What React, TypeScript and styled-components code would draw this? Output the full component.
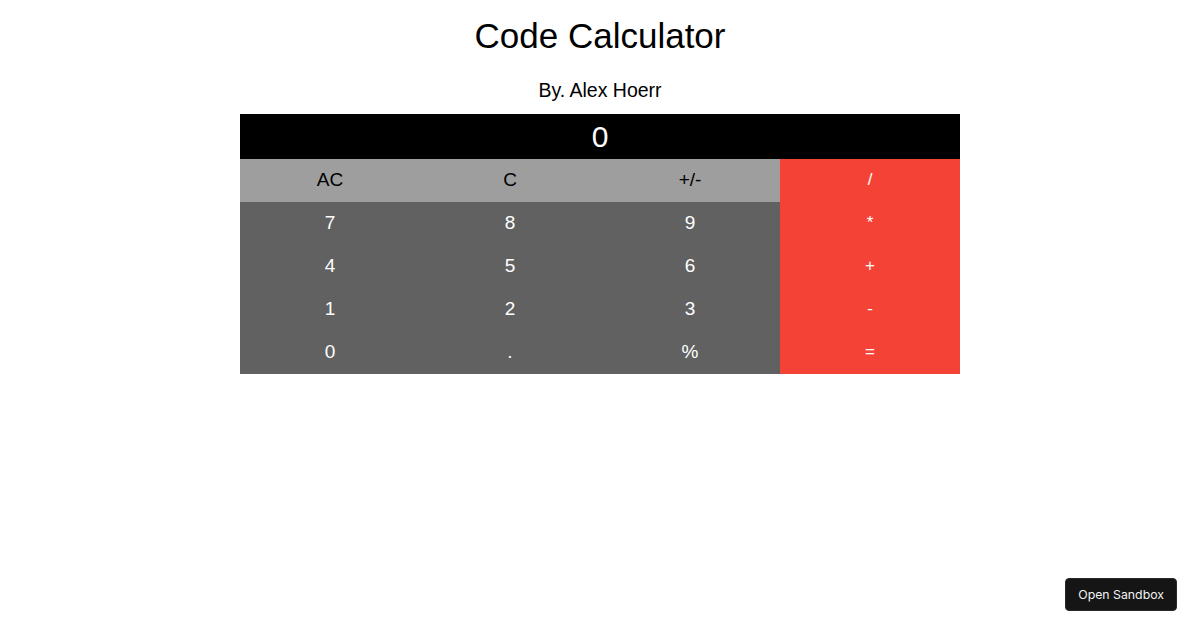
import React, { useState } from 'react';
import styled, { createGlobalStyle } from 'styled-components';

const GlobalStyle = createGlobalStyle`
  html, body {
    margin: 0;
    padding: 0;
    background: #FFFFFF;
    font-family: "Liberation Sans", Arial, sans-serif;
  }
`;

const Page = styled.div`
  display: flex;
  flex-direction: column;
  align-items: center;
  padding-top: 15px;
`;

const Title = styled.h1`
  margin: 0;
  font-size: 35px;
  line-height: 42px;
  font-weight: 400;
  color: #000000;
`;

const Author = styled.h2`
  margin: 21px 0 12px;
  font-size: 19.5px;
  line-height: 24px;
  font-weight: 400;
  color: #000000;
`;

const Calculator = styled.div`
  width: 720px;
`;

const Display = styled.div`
  height: 45px;
  background: #000000;
  color: #FFFFFF;
  font-size: 30px;
  display: flex;
  align-items: center;
  justify-content: center;
`;

const Keys = styled.div`
  display: grid;
  grid-template-columns: repeat(4, 1fr);
  grid-auto-rows: 43px;
`;

type KeyKind = 'function' | 'number' | 'operator';

const Key = styled.button<{ $kind: KeyKind }>`
  border: none;
  outline: none;
  margin: 0;
  padding: 0 0 2px;
  font-family: "Liberation Sans", Arial, sans-serif;
  font-size: ${({ $kind }) => ($kind === 'operator' ? '17px' : '19px')};
  cursor: pointer;
  display: flex;
  align-items: center;
  justify-content: center;
  background: ${({ $kind }) =>
    $kind === 'function' ? '#9E9E9E' : $kind === 'operator' ? '#F44336' : '#616161'};
  color: ${({ $kind }) => ($kind === 'function' ? '#000000' : '#FFFFFF')};
`;

const SandboxButton = styled.a`
  position: fixed;
  right: 23px;
  bottom: 19px;
  height: 33px;
  padding: 0 12px;
  box-sizing: border-box;
  display: flex;
  align-items: center;
  background: #151515;
  border: 1px solid #2a2a2a;
  border-radius: 4px;
  color: #F2F2F2;
  font-family: Inter, "Liberation Sans", sans-serif;
  font-size: 12.3px;
  text-decoration: none;
`;

const keys: { label: string; kind: KeyKind }[] = [
  { label: 'AC', kind: 'function' },
  { label: 'C', kind: 'function' },
  { label: '+/-', kind: 'function' },
  { label: '/', kind: 'operator' },
  { label: '7', kind: 'number' },
  { label: '8', kind: 'number' },
  { label: '9', kind: 'number' },
  { label: '*', kind: 'operator' },
  { label: '4', kind: 'number' },
  { label: '5', kind: 'number' },
  { label: '6', kind: 'number' },
  { label: '+', kind: 'operator' },
  { label: '1', kind: 'number' },
  { label: '2', kind: 'number' },
  { label: '3', kind: 'number' },
  { label: '-', kind: 'operator' },
  { label: '0', kind: 'number' },
  { label: '.', kind: 'number' },
  { label: '%', kind: 'number' },
  { label: '=', kind: 'operator' },
];

export default function App() {
  const [value] = useState('0');

  return (
    <>
      <GlobalStyle />
      <Page>
        <Title>Code Calculator</Title>
        <Author>By. Alex Hoerr</Author>
        <Calculator>
          <Display>{value}</Display>
          <Keys>
            {keys.map((k) => (
              <Key key={k.label} $kind={k.kind}>
                {k.label}
              </Key>
            ))}
          </Keys>
        </Calculator>
      </Page>
      <SandboxButton href="#">Open Sandbox</SandboxButton>
    </>
  );
}
